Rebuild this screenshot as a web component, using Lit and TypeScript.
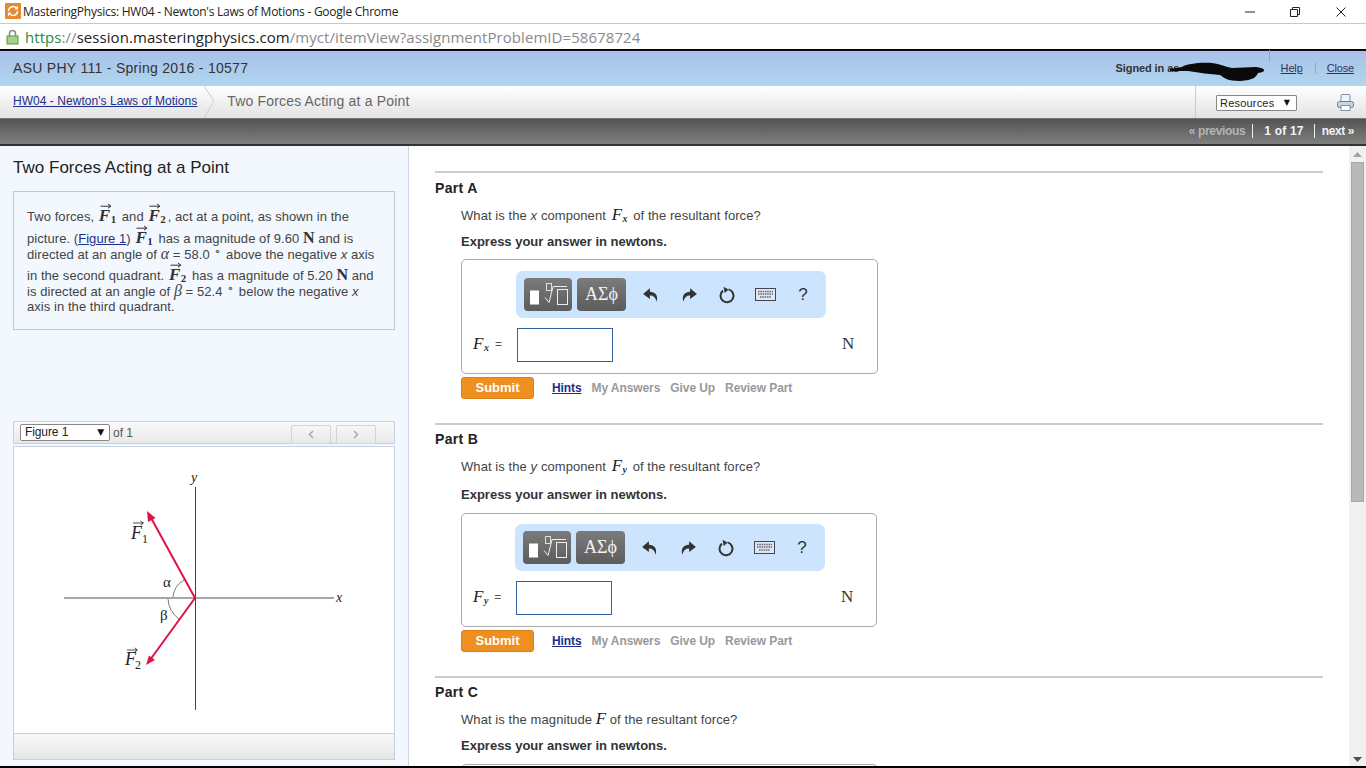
import { LitElement, html, css } from "lit";
import { customElement } from "lit/decorators.js";

const arrow = html`<svg class="varrow" viewBox="0 0 12 6"><path d="M0.5 3.2H10.5M8 1L11 3.2L8 5.2" fill="none" stroke="#333" stroke-width="1"/></svg>`;
const vec = (n: string) => html`<span class="m vec">${arrow}<i>F</i><sub>${n}</sub></span>`;
const comp = (n: string) => html`<span class="m plain"><i>F</i><sub class="isub">${n}</sub></span>`;

const toolbar = html`<div class="toolbar">
  <span class="tbtn t1"><svg width="44" height="28" viewBox="0 0 44 28">
    <rect x="4" y="9.500" width="9" height="14" fill="#fff"/>
    <rect x="20.500" y="2.500" width="5" height="7" fill="none" stroke="#ddd"/>
    <path d="M19 16.500L23 21.500L27 5.500H41" fill="none" stroke="#eee" stroke-width="1"/>
    <rect x="31.500" y="8.500" width="10" height="15" fill="none" stroke="#eee"/></svg></span>
  <span class="tbtn t2">ΑΣϕ</span>
  <span class="ic first"><svg width="18" height="18" viewBox="0 0 16 16"><path d="M7 2L1 7L7 11.500V8.500C10 8.500 12 10 13 14C14.500 9 12.500 5.500 7 5.200Z" fill="#333"/></svg></span>
  <span class="ic"><svg width="18" height="18" viewBox="0 0 16 16"><path d="M9 2L15 7L9 11.500V8.500C6 8.500 4 10 3 14C1.500 9 3.500 5.500 9 5.200Z" fill="#333"/></svg></span>
  <span class="ic"><svg width="18" height="18" viewBox="0 0 18 18"><path d="M10.500 3.400A6.500 6.500 0 1 1 5 4.600" fill="none" stroke="#333" stroke-width="2"/><path d="M5.500 0.800L10.500 3.400L6.800 7Z" fill="#333"/></svg></span>
  <span class="ic"><svg width="21" height="13" viewBox="0 0 21 13"><rect x="0.500" y="0.500" width="20" height="12" fill="#dfe7ef" stroke="#445"/><path d="M3 3.500H18M3 6H18M5 9H16" stroke="#667" stroke-width="1.300" stroke-dasharray="1.500 .8"/></svg></span>
  <span class="ic q">?</span>
</div>`;

const answerBox = (sym: string) => html`<div class="answer">
  ${toolbar}
  <div class="entry"><span class="lbl">${comp(sym)}<span class="eq">=</span></span><span class="input"></span><span class="unit">N</span></div>
</div>
<div class="actions"><span class="submit">Submit</span><a class="hints">Hints</a><span class="act">My Answers</span><span class="act">Give Up</span><span class="act">Review Part</span></div>`;

@customElement("app-root")
export class AppRoot extends LitElement {
  static styles = css`
    :host { display: block; width: 1366px; height: 768px; overflow: hidden; background: #000; font-family: "Liberation Sans", Arial, sans-serif; color: #333; font-size: 13px; }
    * { box-sizing: border-box; }
    .titlebar { height: 24px; background: #fff; border-bottom: 1px solid #c8c8c8; display: flex; align-items: center; padding-left: 5px; font-family: "Open Sans", sans-serif; font-size: 12px; color: #222; }
    .titlebar .fav { margin-right: 2px; display: block; margin-top: -1px; }
    .titlebar .ttl { flex: 1; letter-spacing: -.24px; }
    .win { display: flex; align-items: center; }
    .win svg { display: block; }
    .win .w1 { margin-right: 35px; } .win .w2 { margin-right: 36px; } .win .w3 { margin-right: 20px; }
    .urlbar { height: 26px; background: #fff; display: flex; align-items: center; padding-left: 6px; font-family: "Open Sans", sans-serif; font-size: 15px; color: #8a8a8a; letter-spacing: .06px; border-bottom: 1px solid #000; }
    .urlbar svg { margin-right: 6px; display: block; }
    .urlbar .s { color: #2b8a3e; } .urlbar .d { color: #222; }
    .courseBar { position: relative; height: 36px; background: linear-gradient(#a9c0e9, #b0d6ef); border-top: 1px solid #111; display: flex; align-items: center; padding: 0 12px 2px 13px; }
    .course { flex: 1; font-size: 14px; letter-spacing: .29px; color: #333; }
    .signed { font-size: 11px; font-weight: bold; letter-spacing: -.1px; width: 153px; }
    .toplink { font-size: 11px; color: #335; text-decoration: underline; letter-spacing: -.15px; }
    .vs { width: 1px; height: 12px; background: #8ea9c4; }
    .vs.a { margin-right: 11px; } .vs.b { margin: 0 11px 0 12px; }
    .redact { position: absolute; left: 1170px; top: 11px; }
    .crumbs { height: 33px; background: linear-gradient(#fff, #e2e2e2); display: flex; align-items: center; padding-left: 13px; border-bottom: 1px solid #777; }
    .crumbs a { color: #1c2f8a; text-decoration: underline; font-size: 12px; letter-spacing: .04px; margin-top: -2px; }
    .crumbs svg.ch { display: block; margin: 0 13px 0 7px; }
    .cur { flex: 1; font-size: 14px; color: #666; letter-spacing: .17px; margin-top: -2px; }
    .tools { width: 171px; height: 32px; border-left: 1px solid #ccc; display: flex; align-items: center; padding-left: 20px; }
    .res { width: 81px; height: 16px; border: 1px solid #888; background: #fff; border-radius: 1px; font-size: 11px; letter-spacing: .2px; line-height: 14px; padding-left: 3px; display: flex; color: #222; margin-top: 1px; }
    .res b, .fsel b { margin-left: auto; font-family: "DejaVu Sans", sans-serif; font-size: 8px; padding-right: 6px; font-weight: normal; color: #111; }
    .tools svg { margin-left: 40px; display: block; }
    .navbar { height: 27px; background: linear-gradient(#535353, #808080); border-bottom: 2px solid #333; display: flex; align-items: center; justify-content: flex-end; padding: 0 12px 2px 0; font-size: 12px; font-weight: bold; color: #f2f2f2; }
    .navbar .prev { color: #b5b5b5; letter-spacing: -.35px; }
    .navbar .cnt { letter-spacing: .2px; }
    .navbar .nx { letter-spacing: -.4px; }
    .navbar i { width: 1px; height: 14px; background: #eee; display: block; }
    .navbar .p1 { margin: 0 11px 0 7px; } .navbar .p2 { margin: 0 7px 0 10px; }
    .main { height: 620px; display: flex; background: #fff; overflow: hidden; }
    .left { width: 409px; flex: none; background: #f2f8fe; border-right: 1px solid #c9d6e4; padding: 0 13px; }
    .left h1 { margin: 0; height: 45px; font-size: 17px; font-weight: normal; line-height: 43px; color: #222; letter-spacing: .02px; }
    .desc { width: 382px; height: 139px; border: 1px solid #bccbdb; padding: 12px 0 0 13px; font-size: 13px; color: #444; letter-spacing: .06px; white-space: nowrap; }
    .line { height: 16px; line-height: 16px; } .line.tall { height: 21px; padding-top: 5px; }
    .desc a { color: #1c2f8a; text-decoration: underline; }
    .m { position: relative; display: inline-block; font-family: "Liberation Serif", serif; font-size: 17px; line-height: .8; color: #333; letter-spacing: 0; }
    .qn .m { margin: 0 2px; }
    .c .qn .m { margin: 0; }
    .m i { font-weight: bold; }
    .m.plain i { font-weight: normal; color: #222; }
    .m sub { font-size: 11px; font-weight: bold; font-style: normal; vertical-align: -2px; line-height: 0; margin-left: .5px; }
    .m sub.isub { font-style: italic; font-size: 10px; }
    .vec { margin: 0 2px 0 1px; }
    .varrow { position: absolute; left: 1px; top: -6px; width: 12px; height: 6px; }
    .nn { font-family: "Liberation Serif", serif; font-size: 16px; font-weight: bold; color: #333; letter-spacing: 0; line-height: 1; }
    .gr { font-family: "Liberation Serif", serif; font-style: italic; font-size: 16px; line-height: 1; }
    .deg { font-size: 11px; position: relative; top: -4px; margin: 0 1px; font-family: "Liberation Serif", serif; line-height: 1; }
    .figbar { margin-top: 91px; width: 382px; height: 23px; border: 1px solid #c5d1de; background: linear-gradient(#fafafa, #e8e8e8); display: flex; align-items: center; padding: 0 0 0 6px; font-size: 12px; }
    .fsel { width: 90px; height: 17px; border: 1px solid #888; background: #fff; border-radius: 2px; font-size: 12px; letter-spacing: -.1px; line-height: 15px; padding-left: 4px; color: #222; display: flex; }
    .fsel b { font-size: 9px; padding-right: 5px; }
    .of { margin-left: 3px; color: #555; flex: 1; }
    .pg { width: 40px; height: 19px; margin: 3px 5px 0 0; border: 1px solid #d4d4d4; border-radius: 2px; background: linear-gradient(#f6f6f6, #e9e9e9); display: flex; align-items: center; justify-content: center; }
    .pg.z { margin-right: 18px; }
    .figure { margin-top: 2px; width: 382px; height: 287px; border: 1px solid #c5d1de; border-bottom: 0; background: #fff; }
    .figure svg { display: block; }
    .figure text { font-family: "Liberation Serif", serif; fill: #222; }
    .figfoot { width: 382px; height: 27px; border: 1px solid #c5d1de; background: linear-gradient(#f8f8f8, #e6e6e6); }
    .right { flex: 1; padding: 25px 0 0 26px; overflow: hidden; }
    .part { width: 888px; border-top: 2px solid #ccc; }
    .plabel { font-size: 14px; font-weight: bold; color: #222; height: 30px; line-height: 30px; letter-spacing: .35px; }
    .body { margin-left: 26px; }
    .qn { margin-top: 1px; height: 24px; line-height: 24px; letter-spacing: .08px; color: #444; }
    .qn em { font-style: italic; }
    .ex { margin-top: 2px; height: 24px; line-height: 24px; font-weight: bold; color: #333; }
    .answer { margin-top: 5px; width: 417px; height: 115px; border: 1px solid #aaa; border-radius: 5px; padding: 11px 0 0 54px; background: #fff; }
    .toolbar { width: 310px; height: 47px; background: #cce4fd; border-radius: 7px; display: flex; align-items: center; padding-left: 8px; }
    .tbtn { height: 33px; background: linear-gradient(#7b7b7c, #5c5c5e); border-radius: 4px; display: flex; align-items: center; justify-content: center; color: #f2f2f2; font-family: "Liberation Serif", serif; font-size: 18px; }
    .t1 { width: 48px; margin-right: 5px; } .t2 { width: 49px; }
    .ic { width: 38px; display: flex; justify-content: center; align-items: center; }
    .ic.first { margin-left: 6px; }
    .ic svg { display: block; }
    .ic.q { font-size: 17px; color: #333; }
    .entry { display: flex; align-items: center; height: 34px; margin: 10px 0 0 -54px; }
    .lbl { width: 55px; padding-left: 11px; display: flex; align-items: center; margin-top: -3px; }
    .eq { margin-left: 6px; color: #555; font-size: 12px; }
    .input { width: 96px; height: 34px; border: 1px solid #33629c; background: #fff; }
    .unit { margin-left: 229px; font-family: "Liberation Serif", serif; font-size: 17px; color: #333; margin-top: -2px; }
    .actions { margin-top: 3px; display: flex; align-items: center; font-weight: bold; font-size: 12px; }
    .submit { width: 73px; height: 22px; background: #ef8f20; border: 1px solid #d9821c; border-radius: 3px; color: #fff; text-align: center; line-height: 19px; font-size: 13px; margin-right: 18px; }
    .hints { color: #1c2f8a; text-decoration: underline; margin-right: 10px; letter-spacing: -.1px; }
    .act { color: #999; margin-right: 10px; letter-spacing: -.08px; }
    .a { margin-bottom: 24px; }
    .b { margin-bottom: 24px; }
    .b .plabel, .c .plabel { height: 28px; line-height: 28px; }
    .b .qn, .c .qn { margin-top: 2px; }
    .b .ex { margin-top: 4px; }
    .b .answer { margin-top: 6px; height: 114px; padding-top: 10px; width: 416px; }
    .b .toolbar { margin-left: -1px; }
    .b .entry { margin-left: -54px; }
    .b .lbl { width: 54px; }
    .c .answer { margin-top: 6px; }
    .scroll { width: 17px; flex: none; background: #f1f1f1; display: flex; flex-direction: column; align-items: center; }
    .up { margin-top: 6px; display: block; }
    .thumb { width: 13px; height: 340px; margin-top: 5px; background: #b9b9b9; border: 1px solid #a8a8a8; }
    .down { margin-top: auto; margin-bottom: 4px; display: block; }
  `;

  render() {
    return html`
      <div class="titlebar">
        <svg class="fav" width="16" height="16" viewBox="0 0 16 16"><rect width="16" height="16" rx="1" fill="#e58a2e"/><path d="M3.500 8A4.500 4.500 0 0 1 12 6M12.500 8A4.500 4.500 0 0 1 4 10" fill="none" stroke="#fff" stroke-width="1.600"/><path d="M13 2.500V6.500H9.500ZM3 13.500V9.500H6.500Z" fill="#fff"/></svg>
        <span class="ttl">MasteringPhysics: HW04 - Newton's Laws of Motions - Google Chrome</span>
        <div class="win">
          <svg class="w1" width="10" height="2"><rect width="10" height="1" y="0.500" fill="#222"/></svg>
          <svg class="w2" width="10" height="10" viewBox="0 0 10 10"><path d="M.5 2.500H7.500V9.500H.5ZM2.500 2.500V.5H9.500V7.500H7.500" fill="none" stroke="#222"/></svg>
          <svg class="w3" width="10" height="10" viewBox="0 0 10 10"><path d="M.5 .5L9.500 9.500M9.500 .5L.5 9.500" stroke="#222"/></svg>
        </div>
      </div>
      <div class="urlbar">
        <svg width="13" height="16" viewBox="0 0 13 16"><path d="M3.500 7V4.500a3 3 0 0 1 6 0V7" fill="none" stroke="#888" stroke-width="1.500"/><rect x="1" y="7" width="11" height="8" fill="#a8d08d" stroke="#5a9a3a"/></svg>
        <span><span class="s">https</span>://<span class="d">session.masteringphysics.com</span>/myct/itemView?assignmentProblemID=58678724</span>
      </div>
      <div class="courseBar">
        <span class="course">ASU PHY 111 - Spring 2016 - 10577</span>
        <span class="signed">Signed in as</span>
        <span class="vs a"></span><a class="toplink">Help</a><span class="vs b"></span><a class="toplink">Close</a>
        <svg class="redact" width="98" height="20" viewBox="0 0 98 20"><path d="M0 7L12 5C16 2 30 0 42 1C50 2 56 5 62 6L86 5C96 6 97 10 88 11C86 15 84 18 70 19C58 19 54 16 50 13C40 12 30 11 18 9L0 9Z" fill="#0a0a0a"/></svg>
      </div>
      <div class="crumbs">
        <a>HW04 - Newton's Laws of Motions</a>
        <svg class="ch" width="10" height="32" viewBox="0 0 10 32"><path d="M0 0L10 15L0 32" fill="none" stroke="#ccc"/></svg>
        <span class="cur">Two Forces Acting at a Point</span>
        <div class="tools"><span class="res">Resources<b>▼</b></span>
          <svg width="17" height="17" viewBox="0 0 17 17"><rect x="4" y="0.500" width="9" height="8" rx="1" fill="#eef4fb" stroke="#7d93ad"/><rect x="0.500" y="7.500" width="16" height="6" rx="2" fill="#c9d4e0" stroke="#6d7f93"/><rect x="4" y="11.500" width="9" height="5" fill="#fff" stroke="#7d93ad"/></svg>
        </div>
      </div>
      <div class="navbar"><span class="prev">« previous</span><i class="p1"></i><span class="cnt">1 of 17</span><i class="p2"></i><span class="nx">next »</span></div>
      <div class="main">
        <div class="left">
          <h1>Two Forces Acting at a Point</h1>
          <div class="desc">
            <div class="line tall">Two forces, ${vec("1")} and ${vec("2")}, act at a point, as shown in the</div>
            <div class="line tall">picture. (<a>Figure 1</a>) ${vec("1")} has a magnitude of 9.60 <span class="nn">N</span> and is</div>
            <div class="line">directed at an angle of <span class="gr">α</span> = 58.0 <span class="deg">∘</span> above the negative <em>x</em> axis</div>
            <div class="line tall">in the second quadrant. ${vec("2")} has a magnitude of 5.20 <span class="nn">N</span> and</div>
            <div class="line">is directed at an angle of <span class="gr">β</span> = 52.4 <span class="deg">∘</span> below the negative <em>x</em></div>
            <div class="line">axis in the third quadrant.</div>
          </div>
          <div class="figbar">
            <span class="fsel">Figure 1<b>▼</b></span><span class="of">of 1</span>
            <span class="pg"><svg width="6" height="9" viewBox="0 0 6 9"><path d="M5 1L1.500 4.500L5 8" fill="none" stroke="#aaa" stroke-width="1.500"/></svg></span>
            <span class="pg z"><svg width="6" height="9" viewBox="0 0 6 9"><path d="M1 1L4.500 4.500L1 8" fill="none" stroke="#aaa" stroke-width="1.500"/></svg></span>
          </div>
          <div class="figure">
            <svg width="380" height="286" viewBox="14 447 380 286">
              <path d="M64 598H334" stroke="#888" stroke-width="1.500"/>
              <path d="M195.500 487V710" stroke="#444" stroke-width="1"/>
              <path d="M173 597A22 22 0 0 1 184 580M168 599A27 27 0 0 0 179 619" fill="none" stroke="#555" stroke-width=".8"/>
              <path d="M195 598L150 516" stroke="#dc1445" stroke-width="2"/>
              <path d="M147 511L155.500 518L148 522Z" fill="#dc1445"/>
              <path d="M195 598L150 660" stroke="#dc1445" stroke-width="2"/>
              <path d="M146 665L149 655.500L155 660Z" fill="#dc1445"/>
              <text x="191" y="482" font-size="14" font-style="italic">y</text>
              <text x="336" y="602" font-size="14" font-style="italic">x</text>
              <text x="163" y="587" font-size="15">α</text>
              <text x="160" y="620" font-size="15">β</text>
              <text x="131" y="539" font-size="18" font-style="italic">F</text>
              <text x="142" y="543" font-size="12">1</text>
              <text x="125" y="665" font-size="18" font-style="italic">F</text>
              <text x="135" y="669" font-size="12">2</text>
              <path d="M133 523H143M140.500 521L143.500 523L140.500 525M127 650H137M134.500 648L137.500 650L134.500 652" fill="none" stroke="#222" stroke-width=".8"/>
            </svg>
          </div>
          <div class="figfoot"></div>
        </div>
        <div class="right">
          <section class="part a">
            <div class="plabel">Part A</div>
            <div class="body">
              <div class="qn">What is the <em>x</em> component ${comp("x")} of the resultant force?</div>
              <div class="ex">Express your answer in newtons.</div>
              ${answerBox("x")}
            </div>
          </section>
          <section class="part b">
            <div class="plabel">Part B</div>
            <div class="body">
              <div class="qn">What is the <em>y</em> component ${comp("y")} of the resultant force?</div>
              <div class="ex">Express your answer in newtons.</div>
              ${answerBox("y")}
            </div>
          </section>
          <section class="part c">
            <div class="plabel">Part C</div>
            <div class="body">
              <div class="qn">What is the magnitude <span class="m plain"><i>F</i></span> of the resultant force?</div>
              <div class="ex">Express your answer in newtons.</div>
              <div class="answer"></div>
            </div>
          </section>
        </div>
        <div class="scroll">
          <svg class="up" width="9" height="5"><path d="M4.500 0L9 5H0Z" fill="#a3a3a3"/></svg>
          <div class="thumb"></div>
          <svg class="down" width="9" height="5"><path d="M4.500 5L9 0H0Z" fill="#505050"/></svg>
        </div>
      </div>
    `;
  }
}
